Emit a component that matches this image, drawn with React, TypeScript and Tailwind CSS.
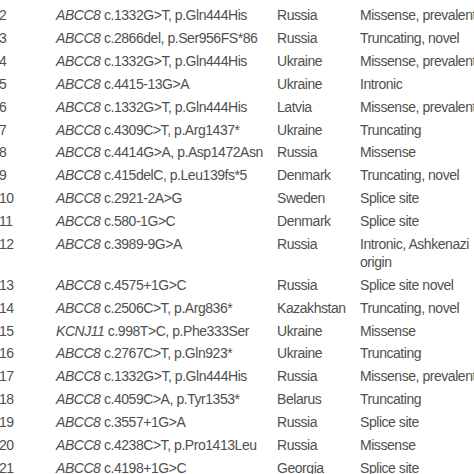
import React from 'react';

type Row = { n: number; gene: string; variant: string; country: string; note: string };

const rows: Row[] = [
  { n: 2, gene: 'ABCC8', variant: 'c.1332G>T, p.Gln444His', country: 'Russia', note: 'Missense, prevalent' },
  { n: 3, gene: 'ABCC8', variant: 'c.2866del, p.Ser956FS*86', country: 'Russia', note: 'Truncating, novel' },
  { n: 4, gene: 'ABCC8', variant: 'c.1332G>T, p.Gln444His', country: 'Ukraine', note: 'Missense, prevalent' },
  { n: 5, gene: 'ABCC8', variant: 'c.4415-13G>A', country: 'Ukraine', note: 'Intronic' },
  { n: 6, gene: 'ABCC8', variant: 'c.1332G>T, p.Gln444His', country: 'Latvia', note: 'Missense, prevalent' },
  { n: 7, gene: 'ABCC8', variant: 'c.4309C>T, p.Arg1437*', country: 'Ukraine', note: 'Truncating' },
  { n: 8, gene: 'ABCC8', variant: 'c.4414G>A, p.Asp1472Asn', country: 'Russia', note: 'Missense' },
  { n: 9, gene: 'ABCC8', variant: 'c.415delC, p.Leu139fs*5', country: 'Denmark', note: 'Truncating, novel' },
  { n: 10, gene: 'ABCC8', variant: 'c.2921-2A>G', country: 'Sweden', note: 'Splice site' },
  { n: 11, gene: 'ABCC8', variant: 'c.580-1G>C', country: 'Denmark', note: 'Splice site' },
  { n: 12, gene: 'ABCC8', variant: 'c.3989-9G>A', country: 'Russia', note: 'Intronic, Ashkenazi origin' },
  { n: 13, gene: 'ABCC8', variant: 'c.4575+1G>C', country: 'Russia', note: 'Splice site novel' },
  { n: 14, gene: 'ABCC8', variant: 'c.2506C>T, p.Arg836*', country: 'Kazakhstan', note: 'Truncating, novel' },
  { n: 15, gene: 'KCNJ11', variant: 'c.998T>C, p.Phe333Ser', country: 'Ukraine', note: 'Missense' },
  { n: 16, gene: 'ABCC8', variant: 'c.2767C>T, p.Gln923*', country: 'Ukraine', note: 'Truncating' },
  { n: 17, gene: 'ABCC8', variant: 'c.1332G>T, p.Gln444His', country: 'Russia', note: 'Missense, prevalent' },
  { n: 18, gene: 'ABCC8', variant: 'c.4059C>A, p.Tyr1353*', country: 'Belarus', note: 'Truncating' },
  { n: 19, gene: 'ABCC8', variant: 'c.3557+1G>A', country: 'Russia', note: 'Splice site' },
  { n: 20, gene: 'ABCC8', variant: 'c.4238C>T, p.Pro1413Leu', country: 'Russia', note: 'Missense' },
  { n: 21, gene: 'ABCC8', variant: 'c.4198+1G>C', country: 'Georgia', note: 'Splice site' },
];

export default function App() {
  return (
    <div
      className="w-[474px] h-[474px] overflow-hidden bg-white text-[#4f4f4f] text-[14px] leading-[18px] tracking-[-0.45px] pt-[3.8px]"
      style={{ fontFamily: '"Liberation Sans", Arial, sans-serif' }}
    >
      {rows.map((r) => (
        <div
          key={r.n}
          className={`grid grid-cols-[56px_221px_83px_118px] py-[2.45px] ${
            r.n === 21 ? 'border-b border-dotted border-[#c8c8c8]' : ''
          }`}
        >
          <div className="-ml-[1px]">{r.n}</div>
          <div className="whitespace-nowrap">
            <span className="italic">{r.gene}</span> {r.variant}
          </div>
          <div className="whitespace-nowrap">{r.country}</div>
          <div>{r.note}</div>
        </div>
      ))}
    </div>
  );
}
